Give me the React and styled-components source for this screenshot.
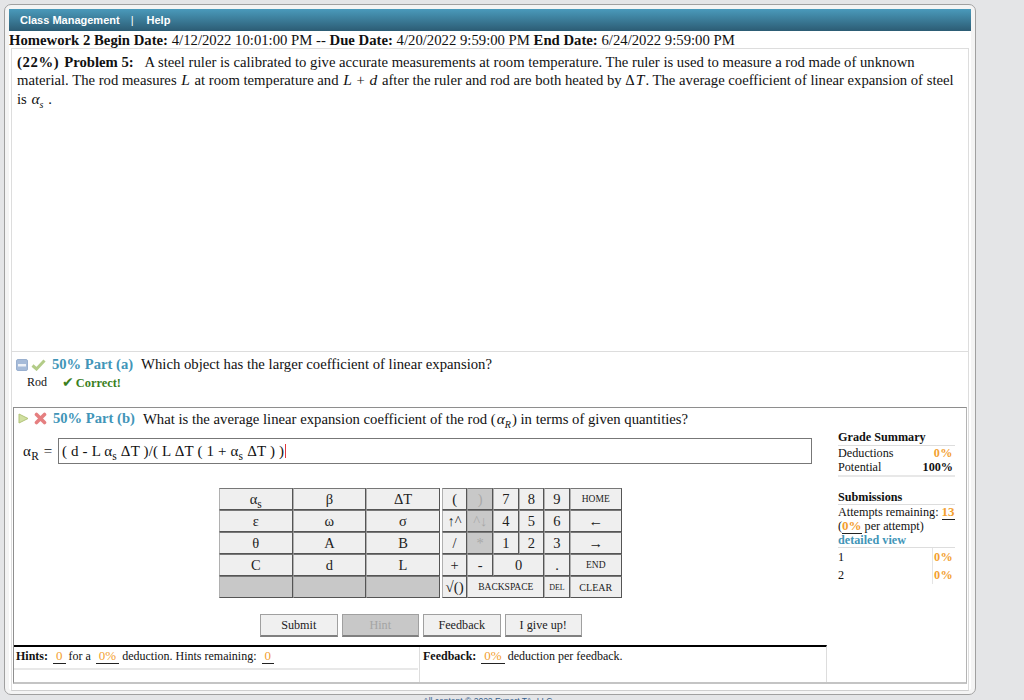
import React from "react";
import styled, { createGlobalStyle } from "styled-components";

const Global = createGlobalStyle`
html, body {
  margin: 0;
  padding: 0;
  height: 700px;
  overflow: hidden;
  background: #e4e5e7;
  font-family: "Liberation Serif", serif;
  color: #111;
}
`;

const Page = styled.div`
  height: 700px;
  padding: 4px 0 0 4px;
  box-sizing: border-box;
  overflow: hidden;
`;

const Card = styled.div`
  width: 972px;
  height: 691px;
  box-sizing: border-box;
  background: #fff;
  border: 1px solid #a0a0a0;
  border-radius: 7px;
  padding: 4px 4px 0;
  box-shadow: inset 0 0 0 4px #f4f4f4;
  display: flex;
  flex-direction: column;
`;

const NavBar = styled.div`
  height: 22px;
  flex: none;
  display: flex;
  align-items: center;
  padding-left: 11px;
  background: linear-gradient(#4a9abb, #2c5c74);
  color: #fff;
  font: bold 11px "Liberation Sans", sans-serif;
`;

const NavSep = styled.span`
  margin: 0 13px 0 11px;
  font-weight: normal;
`;

const DateLine = styled.div`
  height: 17px;
  flex: none;
  font-size: 14.72px;
  line-height: 18px;
  white-space: nowrap;
  b { font-weight: bold; }
`;

const Sheet = styled.div`
  flex: 1;
  margin: 0 2px 3px 2px;
  border: 1px solid #ddd;
  border-bottom: 1px solid #cfcfcf;
  display: flex;
  flex-direction: column;
  min-height: 0;
`;

const Problem = styled.div`
  height: 303px;
  flex: none;
  box-sizing: border-box;
  padding: 4px 5px 0 5px;
  border-bottom: 1px solid #ddd;
  font-size: 14.7px;
  line-height: 18.4px;
  white-space: nowrap;
`;

const Pct = styled.b`
  letter-spacing: 0.6px;
`;

const Heading = styled.b`
  margin: 0 8px 0 5px;
`;

const MathI = styled.i`
  font-size: 15.5px;
  margin: 0 1px;
  sub {
    font-size: 10px;
    line-height: 0;
  }
`;

const PartA = styled.div`
  height: 55px;
  flex: none;
  box-sizing: border-box;
  padding: 3px 0 0 4px;
`;

const PartHead = styled.div`
  display: flex;
  align-items: center;
  height: 19px;
  font-size: 14.72px;
  white-space: pre;
`;

const PartLabel = styled.b`
  color: #4195b8;
  font-size: 14.6px;
  margin: 0 8px 0 3px;
`;

const IconSlot = styled.svg`
  flex: none;
  margin-right: ${(p) => p.$gap || 2}px;
`;

const AnswerRow = styled.div`
  display: flex;
  align-items: center;
  font-size: 12px;
  height: 16px;
  padding-left: 11px;
`;

const Correct = styled.b`
  color: #3a7f1e;
  margin-left: 15px;
  font-size: 12.4px;
  i {
    font: normal 14px "DejaVu Sans", sans-serif;
    margin-right: 2px;
  }
`;

const PartB = styled.div`
  flex: 1;
  margin: 0 1px 6px;
  border: 1px solid #8e8e8e;
  border-right-color: #b4b4b4;
  border-bottom: 2px solid #c4c4c4;
  display: flex;
  flex-direction: column;
  min-height: 0;
`;

const PartBHead = styled(PartHead)`
  height: 21px;
  flex: none;
  padding-left: 4px;
`;

const Split = styled.div`
  flex: 1;
  display: flex;
  min-height: 0;
`;

const Work = styled.div`
  width: 813px;
  flex: none;
  display: flex;
  flex-direction: column;
`;

const Formula = styled.div`
  height: 26px;
  flex: none;
  margin-top: 9px;
  display: flex;
  align-items: center;
  padding-left: 9px;
  font-size: 15px;
  white-space: pre;
  sub {
    font-size: 11.5px;
    line-height: 0;
  }
`;

const FormulaLabel = styled.span`
  width: 35px;
  flex: none;
  letter-spacing: 0.5px;
`;

const InputBox = styled.div`
  width: 754px;
  height: 26px;
  box-sizing: border-box;
  border: 1px solid #777;
  display: flex;
  align-items: center;
  padding-left: 3px;
  letter-spacing: 0.15px;
`;

const Caret = styled.span`
  width: 1px;
  height: 14px;
  background: #e0393e;
  margin-left: 1px;
`;

const PadWrap = styled.div`
  margin: 24px 0 0 205px;
  display: flex;
  gap: 2px;
`;

const SymbolPad = styled.div`
  display: grid;
  grid-template-columns: repeat(3, 73.6px);
  grid-auto-rows: 22px;
`;

const NumPad = styled.div`
  display: grid;
  grid-template-columns: repeat(5, 25.6px) 52px;
  grid-auto-rows: 22px;
`;

const Key = styled.div`
  grid-column: span ${(p) => p.$span || 1};
  box-sizing: border-box;
  display: flex;
  align-items: center;
  justify-content: center;
  background: ${(p) => (p.$off ? "#c8c8c8" : "#efefef")};
  color: ${(p) => (p.$off ? "#a8a8a8" : "#222")};
  border: 1px solid #b0b0b0;
  border-right: 1px solid #555;
  border-bottom: 1px solid #555;
  border-top: 1px solid #777;
  font-size: ${(p) => p.$size || 14.5}px;
  white-space: nowrap;
  sub {
    font-size: 11.5px;
    line-height: 0;
  }
`;

const Actions = styled.div`
  margin: 16px 0 0 246px;
  display: flex;
  gap: 4px;
`;

const ActionButton = styled.div`
  width: 77.5px;
  height: 23px;
  box-sizing: border-box;
  display: flex;
  align-items: center;
  justify-content: center;
  font-size: 12.2px;
  background: ${(p) => (p.$off ? "#c8c8c8" : "#f0f0f0")};
  color: ${(p) => (p.$off ? "#a4a4a4" : "#222")};
  border: 1px solid #a0a0a0;
  border-bottom: 2px solid #808080;
`;

const Notes = styled.div`
  flex: 1;
  margin-top: 8px;
  border-top: 2px solid #000;
  border-right: 1px solid #ddd;
  display: flex;
  font-size: 12px;
  min-height: 0;
`;

const HintNote = styled.div`
  width: 406px;
  flex: none;
  box-sizing: border-box;
  border-right: 1px solid #ddd;
  padding-right: 1px;
`;

const NoteLine = styled.div`
  height: ${(p) => (p.$rule ? 23 : 22)}px;
  box-sizing: border-box;
  padding: 2px 0 0 ${(p) => (p.$rule ? 2 : 3)}px;
  line-height: 14px;
  white-space: nowrap;
  border-bottom: ${(p) => (p.$rule ? "2px solid #e8e8e8" : "none")};
`;

const Blank = styled.span`
  display: inline-block;
  color: #f3a02f;
  border-bottom: 1px solid #222;
  padding: 0 ${(p) => p.$pad ?? 3}px;
  margin: 0 3px 0 ${(p) => p.$left ?? 2}px;
  line-height: 13px;
  height: 14px;
  font-size: 13px;
  font-weight: ${(p) => (p.$bold ? "bold" : "normal")};
  vertical-align: top;
`;

const Side = styled.div`
  width: 117px;
  flex: none;
  padding: 1px 0 0 11px;
  font-size: 12.2px;
  line-height: 14px;
`;

const SideTitle = styled.div`
  font-weight: bold;
  height: ${(p) => p.$height || 15}px;
  border-bottom: 1px solid #ddd;
  margin-top: ${(p) => p.$top || 0}px;
`;

const SideRow = styled.div`
  display: flex;
  justify-content: space-between;
  height: 14px;
  padding-right: 2px;
`;

const SideLine = styled.div`
  height: 14px;
  white-space: nowrap;
`;

const Orange = styled.b`
  color: #f3a02f;
  letter-spacing: 0.5px;
`;

const RuleEnd = styled.div`
  height: 0;
  border-bottom: 2px solid #e8e8e8;
  margin-top: 1px;
`;

const DetailLink = styled.div`
  color: #4195b8;
  font-weight: bold;
  height: 14px;
  border-bottom: 1px solid #ddd;
`;

const AttemptRow = styled.div`
  display: flex;
  justify-content: space-between;
  height: 18px;
  line-height: 18px;
`;

const AttemptPct = styled.div`
  width: 23px;
  padding-left: 1px;
  box-sizing: border-box;
  border-left: 1px solid #e4e4e4;
`;

const Copyright = styled.div`
  padding-left: 419px;
  margin-top: 1px;
  font: 8.5px "Liberation Sans", sans-serif;
  color: #34608c;
`;

const DiskIcon = () => (
  <IconSlot width="12" height="12" viewBox="0 0 12 12" $gap={3}>
    <rect x="0.5" y="0.5" width="11" height="11" rx="1.5" fill="#a6bbd9" stroke="#9ab0cf" />
    <rect x="2" y="5" width="8" height="2.5" fill="#eef2f8" />
  </IconSlot>
);

const CheckIcon = () => (
  <IconSlot width="15" height="13" viewBox="0 0 15 13" $gap={3}>
    <path d="M1.5 7.5 L5.5 11 L13.5 2.5" fill="none" stroke="#b3cc88" strokeWidth="3" />
  </IconSlot>
);

const PlayIcon = () => (
  <IconSlot width="11" height="11" viewBox="0 0 11 11" $gap={5}>
    <path d="M1 1 L10 5.5 L1 10 Z" fill="#d0dfa0" stroke="#b2c47a" />
  </IconSlot>
);

const CrossIcon = () => (
  <IconSlot width="13" height="13" viewBox="0 0 13 13" $gap={3}>
    <path d="M2.5 2.5 L10.5 10.5 M10.5 2.5 L2.5 10.5" stroke="#e57f80" strokeWidth="3.6" strokeLinecap="round" />
  </IconSlot>
);

const symbolKeys = [
  <span>α<sub>s</sub></span>, "β", "ΔT",
  "ε", "ω", "σ",
  "θ", "A", "B",
  "C", "d", "L",
];

const numKeys = [
  { t: "(" }, { t: ")", off: true }, { t: "7" }, { t: "8" }, { t: "9" }, { t: "HOME", size: 9.5 },
  { t: "↑^" }, { t: "^↓", off: true }, { t: "4" }, { t: "5" }, { t: "6" }, { t: "←" },
  { t: "/" }, { t: "*", off: true }, { t: "1" }, { t: "2" }, { t: "3" }, { t: "→" },
  { t: "+" }, { t: "-" }, { t: "0", span: 2 }, { t: "." }, { t: "END", size: 9.5 },
  { t: "√()", size: 15 }, { t: "BACKSPACE", span: 3, size: 9.5 }, { t: "DEL", size: 8 }, { t: "CLEAR", size: 10 },
];

export default function App() {
  return (
    <Page>
      <Global />
      <Card>
        <NavBar>
          Class Management<NavSep>|</NavSep>Help
        </NavBar>
        <DateLine>
          <b>Homework 2 Begin Date:</b> 4/12/2022 10:01:00 PM -- <b>Due Date:</b> 4/20/2022 9:59:00 PM <b>End Date:</b> 6/24/2022 9:59:00 PM
        </DateLine>
        <Sheet>
          <Problem>
            <Pct>(22%)</Pct>
            <Heading>Problem 5:</Heading>
            {" "}A steel ruler is calibrated to give accurate measurements at room temperature. The ruler is used to measure a rod made of unknown
            <br />
            material. The rod measures <MathI>L</MathI> at room temperature and <MathI>L</MathI> + <MathI>d</MathI> after the ruler and rod are both heated by Δ<MathI>T</MathI>. The average coefficient of linear expansion of steel
            <br />
            is <MathI>α<sub>s</sub></MathI> .
          </Problem>
          <PartA>
            <PartHead>
              <DiskIcon />
              <CheckIcon />
              <PartLabel>50% Part (a)</PartLabel>
              <span>Which object has the larger coefficient of linear expansion?</span>
            </PartHead>
            <AnswerRow>
              Rod
              <Correct><i>✔</i>Correct!</Correct>
            </AnswerRow>
          </PartA>
          <PartB>
            <PartBHead>
              <PlayIcon />
              <CrossIcon />
              <PartLabel>50% Part (b)</PartLabel>
              <span>What is the average linear expansion coefficient of the rod (<MathI>α<sub>R</sub></MathI>) in terms of given quantities?</span>
            </PartBHead>
            <Split>
              <Work>
                <Formula>
                  <FormulaLabel>α<sub>R</sub> =</FormulaLabel>
                  <InputBox>
                    <span>( d - L α<sub>s</sub> ΔT )/( L ΔT ( 1 + α<sub>s</sub> ΔT ) )</span>
                    <Caret />
                  </InputBox>
                </Formula>
                <PadWrap>
                  <SymbolPad>
                    {symbolKeys.map((k, i) => (
                      <Key key={i}>{k}</Key>
                    ))}
                    <Key $off />
                    <Key $off />
                    <Key $off />
                  </SymbolPad>
                  <NumPad>
                    {numKeys.map((k, i) => (
                      <Key key={i} $off={k.off} $span={k.span} $size={k.size}>{k.t}</Key>
                    ))}
                  </NumPad>
                </PadWrap>
                <Actions>
                  <ActionButton>Submit</ActionButton>
                  <ActionButton $off>Hint</ActionButton>
                  <ActionButton>Feedback</ActionButton>
                  <ActionButton>I give up!</ActionButton>
                </Actions>
                <Notes>
                  <HintNote>
                    <NoteLine $rule>
                      <b>Hints:</b> <Blank>0</Blank>for a <Blank>0%</Blank>deduction. Hints remaining: <Blank>0</Blank>
                    </NoteLine>
                  </HintNote>
                  <NoteLine>
                    <b>Feedback:</b> <Blank>0%</Blank>deduction per feedback.
                  </NoteLine>
                </Notes>
              </Work>
              <Side>
                <SideTitle>Grade Summary</SideTitle>
                <SideRow>Deductions<Orange>0%</Orange></SideRow>
                <SideRow>Potential<b>100%</b></SideRow>
                <RuleEnd />
                <SideTitle $top={13} $height={14}>Submissions</SideTitle>
                <SideLine>Attempts remaining: <Blank $pad={0} $left={0} $bold>13</Blank></SideLine>
                <SideLine>(<Blank $pad={0} $left={0} $bold>0%</Blank>per attempt)</SideLine>
                <DetailLink>detailed view</DetailLink>
                <AttemptRow>1<AttemptPct><Orange>0%</Orange></AttemptPct></AttemptRow>
                <AttemptRow>2<AttemptPct><Orange>0%</Orange></AttemptPct></AttemptRow>
              </Side>
            </Split>
          </PartB>
        </Sheet>
      </Card>
      <Copyright>All content © 2022 Expert TA, LLC</Copyright>
    </Page>
  );
}
